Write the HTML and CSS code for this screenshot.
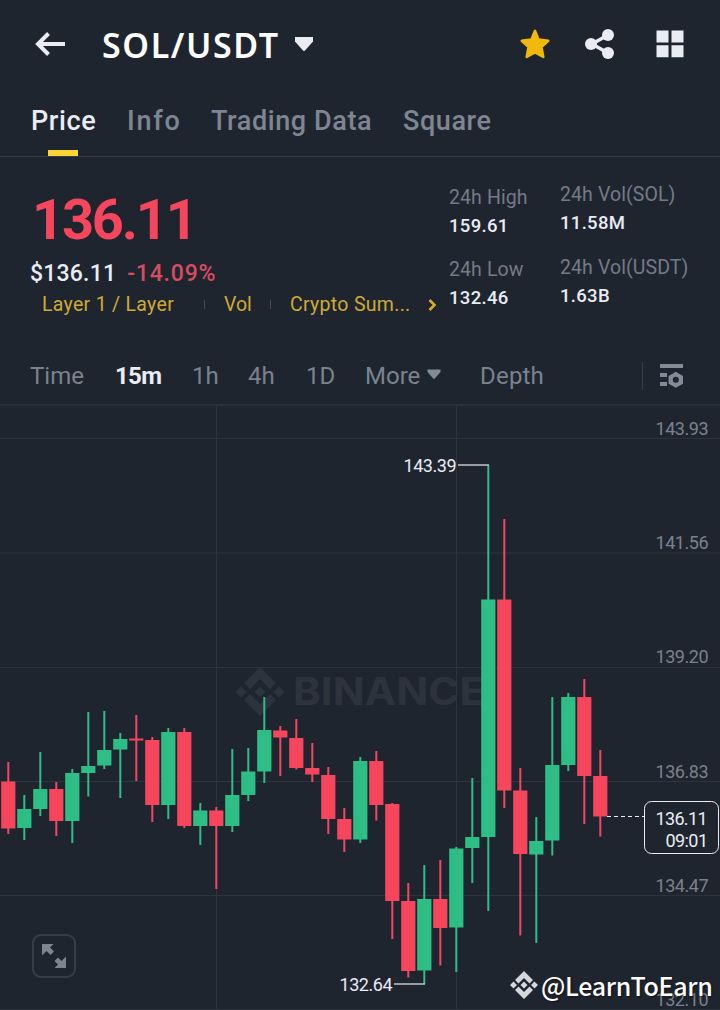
FILE: index.html
```html
<!DOCTYPE html>
<html lang="en">
<head>
<meta charset="utf-8">
<title>SOL/USDT</title>
<link rel="stylesheet" href="styles.css">
</head>
<body>
<main class="app">
  <header class="topbar">
    <svg class="back" width="32" height="26" viewBox="0 0 32 26"><path d="M14.500 2.500 4 13l10.500 10.500M4 13H31" fill="none" stroke="#eaecf4" stroke-width="4"/></svg>
    <h1 class="pair">SOL/USDT</h1>
    <svg class="caret" width="20" height="15" viewBox="0 0 20 15"><path d="M1 0H19V4.500L11 13.500Q10 14.600 9 13.500L1 4.500Z" fill="#eaecf4"/></svg>
    <svg class="star" width="32" height="32" viewBox="0 0 32 32"><path d="M16 2.800 19.600 11.600 29.300 12.800 22.500 19 24.300 29 16 24.500 7.700 29 9.500 19 2.700 12.800 12.400 11.600Z" fill="#f0b90b" stroke="#f0b90b" stroke-width="2.500" stroke-linejoin="round"/></svg>
    <svg class="share" width="30" height="32" viewBox="0 0 30 32"><path d="M23 7 7 16 23 25" fill="none" stroke="#eaecf4" stroke-width="3.500"/><circle cx="23" cy="7" r="6" fill="#eaecf4"/><circle cx="6" cy="16" r="6" fill="#eaecf4"/><circle cx="23" cy="25" r="6" fill="#eaecf4"/></svg>
    <svg class="apps" width="28" height="28" viewBox="0 0 28 28"><path d="M.5.500h12v12H.5zM15.500.500h12v12h-12zM.5 15.300h12v12H.5zM15.500 15.300h12v12h-12z" fill="#eaecf4"/></svg>
  </header>

  <nav class="tabs">
    <span class="tab tab-active">Price</span>
    <span class="tab tab-info">Info</span>
    <span class="tab">Trading Data</span>
    <span class="tab">Square</span>
  </nav>

  <section class="summary">
    <div class="quote">
      <div class="last">136.11</div>
      <div class="sub"><span class="fiat">$136.11</span><span class="change">-14.09%</span></div>
      <div class="tags">
        <span class="tag tag-layer">Layer 1 / Layer</span><i class="sep"></i>
        <span class="tag tag-vol">Vol</span><i class="sep"></i>
        <span class="tag tag-sum">Crypto Sum...</span>
        <svg width="9" height="12" viewBox="0 0 9 12"><path d="M1.500 1 6.500 6 1.500 11" fill="none" stroke="#d9ad2b" stroke-width="2.600"/></svg>
      </div>
    </div>
    <dl class="stats stats-range">
      <dt>24h High</dt><dd>159.61</dd>
      <dt>24h Low</dt><dd>132.46</dd>
    </dl>
    <dl class="stats stats-volume">
      <dt>24h Vol(SOL)</dt><dd>11.58M</dd>
      <dt>24h Vol(USDT)</dt><dd>1.63B</dd>
    </dl>
  </section>

  <nav class="intervals">
    <span>Time</span>
    <span class="on">15m</span>
    <span>1h</span>
    <span>4h</span>
    <span>1D</span>
    <span class="more">More <svg width="14" height="11" viewBox="0 0 14 11"><path d="M.5.500H13.500V3L7.800 9.600Q7 10.500 6.200 9.600L.5 3Z" fill="#848b98"/></svg></span>
    <span class="depth">Depth</span>
    <svg class="settings" width="26" height="26" viewBox="0 0 26 26"><path d="M1 1H24V5H1ZM1 10H8V14H1ZM1 19H8V23H1Z" fill="#848b98"/><path d="M16.800 8.800 24 12.900V20.700L16.800 24.800 9.600 20.700V12.900ZM16.800 13.800A3 3 0 1 0 16.800 19.800 3 3 0 1 0 16.800 13.800Z" fill="#848b98" fill-rule="evenodd"/></svg>
  </nav>

  <section class="chart">
    <svg class="plot" width="720" height="606" viewBox="0 404 720 606">
      <path class="rule" d="M0 405H720"/>
      <path class="grid" d="M0 438.500H720M0 553H720M0 667.500H720M0 781.500H720M0 895.500H720M0 1009.500H720M216.500 405V1010M456.500 405V1010"/>
      <g class="brand">
        <path d="M260 667 276 683 270 689 260 679 250 689 244 683ZM260 716 244 700 250 694 260 704 270 694 276 700ZM260 686.500 265.500 692 260 697.500 254.500 692ZM241 686.500 246.500 692 241 697.500 235.500 692ZM279 686.500 284.500 692 279 697.500 273.500 692Z"/>
        <text x="293" y="705" textLength="192" lengthAdjust="spacingAndGlyphs">BINANCE</text>
      </g>
      <g class="axis">
        <text x="655.500" y="435" textLength="53">143.93</text>
        <text x="655.500" y="549" textLength="53">141.56</text>
        <text x="655.500" y="663" textLength="53">139.20</text>
        <text x="655.500" y="778" textLength="53">136.83</text>
        <text x="655.500" y="892" textLength="53">134.47</text>
        <text x="655.500" y="1006" textLength="53">132.10</text>
      </g>
      <g transform="translate(.3 0)">
        <path class="wick up" d="M24 795V840M40 752V816M72 769V843M88 712V796.500M104 711V769M120 733V798M168 728V819M200 803V845M232 749V832M248 748V801M264 697V783M360 757V843M424 865V984M456 847V972M472 778V883M488 465V911M536 817V943M552 697V855.500M568 693V771"/>
        <path class="wick down" d="M8 762V834M56 782V836M136 715V781M152 737V822M184 728V828M216 807V889M280 726V776M296 719V769.500M312 743V782M328 767V834M344 808V852M376 751V820.500M392 803V939M408 883V977.500M440 860V965.500M504 519V808M520 768V935.500M584 679V824M600 750V836.500"/>
        <path class="body up" d="M24 809V828M40 789V809M72 773V821M88 766V773M104 750V765.500M120 739V749.500M168 732V805M200 810.500V826M232 795V826M248 771.500V795M264 730V771.500M360 761V839.500M424 899V970.500M456 848.500V927.500M472 837V848M488 599.500V837M536 841V854.500M552 765V840.500M568 697V765"/>
        <path class="body down" d="M8 781.500V828.500M56 789V821M136 738.500V740.500M152 740V805M184 732V826M216 810.500V826M280 730.500V737.500M296 738V768M312 768V774.500M328 775V819M344 819V839.500M376 761V805M392 804V901M408 901V971M440 899V928M504 599.500V790.500M520 790.500V854M584 697V776M600 776V816.500"/>
      </g>
      <path class="leader" d="M458 465H489M394 984H425"/>
      <text class="extreme" x="403.500" y="472" textLength="53">143.39</text>
      <text class="extreme" x="339.500" y="991" textLength="53">132.64</text>
      <path class="dash" d="M607 816.500H644"/>
      <rect class="badge" x="644.500" y="801.500" width="74" height="52" rx="7"/>
      <text class="extreme" x="655.500" y="825" textLength="52">136.11</text>
      <text class="extreme" x="665.500" y="847" textLength="42.500">09:01</text>
    </svg>
    <button class="expand" aria-label="Full screen">
      <svg width="26" height="26" viewBox="0 0 26 26"><path d="M1 1H12.500L9 4.500 13 8.500 9.500 12 5.500 8 1 12.500ZM25 25H13.500L17 21.500 13.500 18 17 14.500 20.500 18 25 13.500Z" fill="#7e858f"/></svg>
    </button>
    <div class="handle">
      <svg width="28" height="28" viewBox="0 0 28 28"><path d="M14 0 23 9 19.500 12.400 14 7 8.500 12.400 5 9ZM14 28 5 19 8.500 15.600 14 21 19.500 15.600 23 19ZM14 10.500 17.500 14 14 17.500 10.500 14ZM3.500 10.500 7 14 3.500 17.500 0 14ZM24.500 10.500 28 14 24.500 17.500 21 14Z" fill="#d5d7db"/></svg>
      <span>@LearnToEarn</span>
    </div>
  </section>
</main>
</body>
</html>
```
FILE: styles.css
```css
* { box-sizing: border-box; }
body { margin: 0; background: #1f252f; }
.app { width: 720px; height: 1010px; overflow: hidden; font-family: Roboto, "Noto Sans", sans-serif; color: #eaecf4; }
svg { display: block; flex: none; }

.topbar { display: flex; align-items: center; height: 88px; padding: 0 36px 0 34px; }
.pair { margin: 2px 0 0 36px; width: 192px; font: 600 34px/40px "Noto Sans", sans-serif; letter-spacing: 1.600px; color: #fff; white-space: nowrap; }
.star { margin-left: 205px; }
.share { margin-left: 34px; }
.apps { margin-left: auto; }

.tabs { display: grid; grid-template-columns: 96px 84px 192px auto; height: 69px; padding-left: 31px; border-bottom: 1px solid #343a45; }
.tab { position: relative; font-size: 27px; line-height: 66px; font-weight: 500; color: #7f8693; white-space: nowrap; letter-spacing: .6px; }
.tab-info { letter-spacing: 1.800px; }
.tab-active { color: #eaecf4; }
.tab-active::after { content: ""; position: absolute; left: 17px; bottom: 0; width: 30px; height: 6px; background: #fcd535; }

.summary { display: grid; grid-template-columns: 419px 111px 1fr; height: 189px; padding-left: 30px; }
.last { margin-top: 30px; height: 66px; padding-left: 2px; font-size: 56px; line-height: 66px; font-weight: 700; color: #f6465d; letter-spacing: -2.200px; }
.sub { display: flex; gap: 11px; margin-top: 6px; font-size: 23px; line-height: 30px; font-weight: 500; letter-spacing: .2px; }
.change { color: #d94b60; letter-spacing: .8px; }
.tags { display: flex; align-items: center; height: 31px; padding-left: 12px; font-size: 19.500px; letter-spacing: .3px; color: #ceaa36; white-space: nowrap; }
.tag-layer { width: 162px; }
.tag-vol { width: 46px; margin-left: 19px; letter-spacing: 0; }
.tag-sum { width: 138px; margin-left: 19px; }
.sep { width: 1px; height: 9px; background: #464b54; }
.stats { margin: 0; font-size: 19.500px; line-height: 28px; white-space: nowrap; }
.stats-range { padding-top: 27px; }
.stats-volume { padding-top: 24px; }
.stats-volume dd:first-of-type { margin-bottom: 17px; }
.stats dt { color: #747b87; letter-spacing: .1px; }
.stats dd { margin: 0 0 16px; font-weight: 500; font-size: 18.500px; letter-spacing: .3px; }

.intervals { display: grid; grid-template-columns: 85px 77px 56px 58px 59px 115px 163px auto; align-items: center; height: 58px; padding: 1px 0 0 30px; font-size: 24px; color: #7b828e; }
.intervals .on { font-weight: 700; color: #eaecf4; letter-spacing: -.7px; }
.more { display: flex; align-items: center; gap: 7px; }
.more svg { margin-bottom: 3px; }
.depth { border-right: 1px solid #3a404a; letter-spacing: .2px; }
.settings { margin-left: 16px; }

.chart { position: relative; height: 606px; }
.rule { stroke: #2b313b; stroke-width: 2; }
.grid { stroke: #2e343e; stroke-width: 1; fill: none; }
.brand { fill: #2d333d; font: 700 38px Inter, sans-serif; }
.axis { fill: #7b818c; font-size: 18px; }
.extreme { fill: #eaecf4; font-size: 18px; }
.wick { stroke-width: 2; fill: none; }
.body { stroke-width: 14.200; fill: none; }
.up { stroke: #2ebd85; }
.down { stroke: #f6465d; }
.leader { stroke: #bfc3c9; stroke-width: 1.500; fill: none; }
.dash { stroke: #eaecf4; stroke-width: 1; stroke-dasharray: 4 3; }
.badge { fill: #1f252f; stroke: #eaecf4; }
.expand { position: absolute; left: 32px; top: 530px; width: 44px; height: 44px; display: grid; place-items: center; padding: 0; border: 2px solid #373d47; border-radius: 9px; background: none; }
.handle { position: absolute; left: 510px; top: 563px; display: flex; align-items: center; gap: 3px; font: 500 25px/36px "Noto Sans CJK SC", sans-serif; letter-spacing: -.3px; color: #fff; white-space: nowrap; text-shadow: 1px 1px 2px #0008; }
```
